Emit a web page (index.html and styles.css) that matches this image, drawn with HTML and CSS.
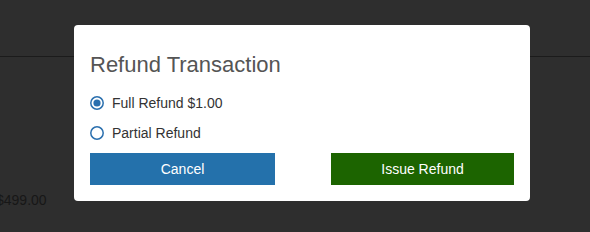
FILE: index.html
```html
<!DOCTYPE html>
<html>
<head>
<meta charset="utf-8">
<link rel="stylesheet" href="styles.css">
</head>
<body>
<div class="page">
  <div class="topbar"></div>
  <div class="content">
    <div class="amount">$499.00</div>
  </div>
</div>
<div class="modal">
  <h2 class="title">Refund Transaction</h2>
  <div class="options">
    <label class="option">
      <svg class="radio" width="14" height="14" viewBox="0 0 14 14"><circle cx="7" cy="7" r="6.2" fill="#fff" stroke="#2a6fae" stroke-width="1.5"/><circle cx="7" cy="7" r="3.6" fill="#2a6fae"/></svg>
      <span>Full Refund $1.00</span>
    </label>
    <label class="option">
      <svg class="radio" width="14" height="14" viewBox="0 0 14 14"><circle cx="7" cy="7" r="6.2" fill="#fff" stroke="#2a6fae" stroke-width="1.5"/></svg>
      <span>Partial Refund</span>
    </label>
  </div>
  <div class="actions">
    <button class="btn btn-cancel">Cancel</button>
    <button class="btn btn-issue">Issue Refund</button>
  </div>
</div>
</body>
</html>
```
FILE: styles.css
```css
html, body {
  margin: 0;
  padding: 0;
  background: #2e2e2e;
  width: 590px;
  height: 232px;
  overflow: hidden;
  font-family: "Liberation Sans", Arial, Helvetica, sans-serif;
}
.page {
  width: 590px;
  height: 232px;
}
.topbar {
  height: 56px;
  border-bottom: 1px solid #1b1b1b;
}
.content {
  padding-top: 134px;
}
.amount {
  margin-left: -4px;
  font-size: 14px;
  line-height: 18px;
  color: #171717;
}
.modal {
  position: absolute;
  left: 74px;
  top: 25px;
  width: 456px;
  height: 176px;
  box-sizing: border-box;
  padding: 27px 16px 16px;
  background: #fff;
  border-radius: 4px;
}
.title {
  margin: 0;
  font-size: 22px;
  line-height: 26px;
  font-weight: normal;
  color: #555555;
}
.options {
  margin-top: 10px;
}
.option {
  display: flex;
  align-items: center;
  gap: 8px;
  height: 30px;
  font-size: 14px;
  color: #333333;
}
.radio {
  display: block;
  flex: none;
}
.actions {
  margin-top: 5px;
  display: flex;
  justify-content: space-between;
}
.btn {
  height: 32px;
  border: 0;
  margin: 0;
  padding: 0;
  font-family: "Liberation Sans", Arial, Helvetica, sans-serif;
  font-size: 14px;
  color: #ffffff;
}
.btn-cancel {
  width: 185px;
  background: #2471ab;
}
.btn-issue {
  width: 183px;
  background: #1c6400;
}
```
